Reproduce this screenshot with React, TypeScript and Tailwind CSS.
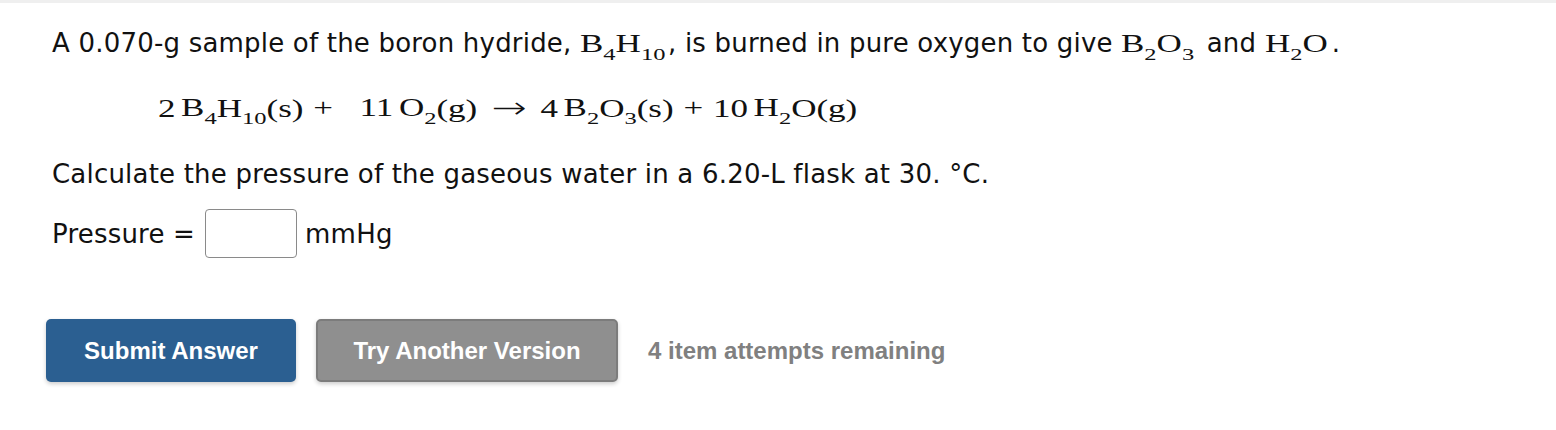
import React from 'react';

const Sub: React.FC<{ children: React.ReactNode }> = ({ children }) => (
    <sub className="text-[0.7em] leading-none align-[-0.2em]">{children}</sub>
);

// inline formula, widened to match the math font of the page
const M: React.FC<{ w: string; children: React.ReactNode }> = ({ w, children }) => (
    <span className={`inline-block leading-none ${w}`}>
        <span className="inline-block origin-left scale-x-[1.4] whitespace-nowrap font-['Liberation_Serif',serif] text-[25px] tracking-normal">
            {children}
        </span>
    </span>
);

const App: React.FC = () => {
    return (
        <div className="w-[1556px] h-[430px] bg-white border-t-[3px] border-[#efefef] font-['DejaVu_Sans',sans-serif] text-[26px] tracking-[0.2px] leading-[36px] text-[#111]">
            <div className="pl-[52px] pt-[22px]">
                <p className="whitespace-nowrap">
                    A 0.070-g sample of the boron hydride, <M w="w-[88px]">B<Sub>4</Sub>H<Sub>10</Sub></M>, is burned in pure oxygen to give{' '}
                    <M w="w-[77px]">B<Sub>2</Sub>O<Sub>3</Sub></M> and <M w="w-[67px]">H<Sub>2</Sub>O</M>.
                </p>
                <div className="mt-[29px] pl-[106px] h-[36px] flex items-center">
                    <span className="inline-block origin-left scale-x-[1.4] whitespace-nowrap font-['Liberation_Serif',serif] text-[25px] tracking-normal leading-none">
                        2<span className="ml-[4px]">B</span><Sub>4</Sub>H<Sub>10</Sub>(s)
                        <span className="mx-[7px]">+</span>
                        <span className="ml-[12px]">11</span>
                        <span className="ml-[4px]">O</span><Sub>2</Sub>(g)
                        <span className="mx-[10px] font-['DejaVu_Sans',sans-serif] text-[30px] font-light align-[-0.04em]">→</span>
                        4<span className="ml-[4px]">B</span><Sub>2</Sub>O<Sub>3</Sub>(s)
                        <span className="mx-[7px]">+</span>
                        10<span className="ml-[4px]">H</span><Sub>2</Sub>O(g)
                    </span>
                </div>
                <p className="mt-[30px] whitespace-nowrap">Calculate the pressure of the gaseous water in a 6.20-L flask at 30. °C.</p>
                <div className="mt-[17px] flex items-center h-[49px]">
                    <span>Pressure =</span>
                    <input
                        type="text"
                        className="ml-[10px] w-[92px] h-[49px] border border-[#8a8a8a] rounded-[4px] outline-none"
                    />
                    <span className="ml-[8px]">mmHg</span>
                </div>
            </div>
            <div className="mt-[61px] pl-[46px] flex items-center font-['Liberation_Sans',sans-serif] font-bold text-[24px] tracking-normal">
                <button className="w-[250px] h-[63px] rounded-[5px] bg-[#2b5f91] text-white shadow-[0_2px_4px_rgba(0,0,0,0.2)]">
                    Submit Answer
                </button>
                <button className="ml-[20px] w-[302px] h-[63px] rounded-[5px] bg-[#8f8f8f] border-2 border-[#7c7c7c] text-white shadow-[0_2px_4px_rgba(0,0,0,0.2)]">
                    Try Another Version
                </button>
                <span className="ml-[30px] text-[#808080]">4 item attempts remaining</span>
            </div>
        </div>
    );
};

export default App;
